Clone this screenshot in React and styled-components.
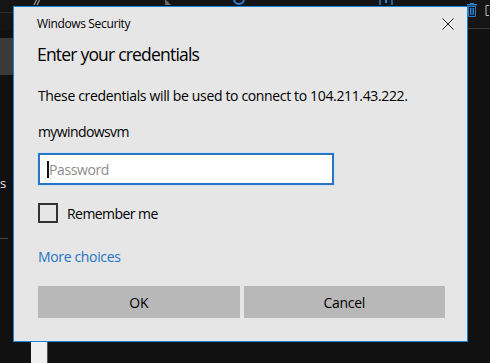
import styled, { createGlobalStyle } from "styled-components";

const GlobalStyle = createGlobalStyle`
  html, body {
    margin: 0;
    padding: 0;
    background: #111111;
  }
  * {
    box-sizing: border-box;
  }
`;

const Desktop = styled.div`
  position: relative;
  width: 490px;
  height: 363px;
  overflow: hidden;
  background: #111111;
  font-family: "Segoe UI", "Open Sans", sans-serif;
`;

// bits of the app that sits behind the dialog
const TopStrip = styled.div`
  position: absolute;
  left: 0;
  top: 0;
  width: 490px;
  height: 30px;
  background: #151515;
`;

const StripIcon = styled.div`
  position: absolute;
  top: ${(p) => p.top || 0}px;
  left: ${(p) => p.left}px;
  color: ${(p) => p.color || "#2d7fd0"};
  line-height: 0;
`;

const SideRow = styled.div`
  position: absolute;
  left: 0;
  top: 38px;
  width: 14px;
  height: 37px;
  background: #3a3a3a;
`;

const SideGlyph = styled.div`
  position: absolute;
  left: 0;
  top: 174px;
  color: #e8e8e8;
  font-size: 13px;
  font-family: "Open Sans", sans-serif;
`;

const SideRule = styled.div`
  position: absolute;
  left: 0;
  top: ${(p) => p.top}px;
  width: ${(p) => p.width}px;
  height: 1px;
  background: ${(p) => p.color || "#4a4a4a"};
`;

const RightRule = styled.div`
  position: absolute;
  left: 467px;
  top: 28px;
  width: 23px;
  height: 1px;
  background: #3a3a3a;
`;

const BottomTab = styled.div`
  position: absolute;
  left: 31px;
  top: 340px;
  width: 17px;
  height: 30px;
  background: #efefef;
  border-right: 1px solid #555555;
`;

const Dialog = styled.div`
  position: absolute;
  left: 13px;
  top: 6px;
  width: 455px;
  height: 336px;
  background: #e6e6e6;
  border: 1px solid #1a84d8;
  display: flex;
  flex-direction: column;
  color: #000000;
`;

const TitleBar = styled.div`
  height: 33px;
  display: flex;
  align-items: center;
  justify-content: space-between;
  padding-left: 23px;
  padding-right: 4px;
`;

const TitleText = styled.span`
  font-size: 12px;
  letter-spacing: -0.35px;
`;

const CloseButton = styled.div`
  width: 30px;
  height: 30px;
  display: flex;
  align-items: center;
  justify-content: center;
  margin-top: 1px;
`;

const Body = styled.div`
  display: flex;
  flex-direction: column;
  padding: 0 22px 0 24px;
`;

const Heading = styled.div`
  height: 28px;
  line-height: 29px;
  font-size: 17.5px;
  letter-spacing: -0.8px;
  margin-left: -1px;
`;

const Line = styled.div`
  height: 20px;
  line-height: 20px;
  font-size: ${(p) => p.size || 14}px;
  letter-spacing: ${(p) => p.spacing || -0.35}px;
  margin-top: ${(p) => p.gap}px;
  color: ${(p) => p.color || "#000000"};
`;

const Field = styled.div`
  margin-top: 11px;
  width: 296px;
  height: 32px;
  background: #ffffff;
  border: 2px solid #2a74c0;
  box-shadow: 0 0 0 1px #cfe4f7;
  display: flex;
  align-items: center;
  padding-left: 7px;
`;

const Caret = styled.span`
  width: 2px;
  height: 17px;
  background: #111111;
`;

const Placeholder = styled.span`
  font-size: 14px;
  letter-spacing: -0.4px;
  color: #8c8c8c;
`;

const CheckRow = styled.label`
  margin-top: 18px;
  height: 20px;
  display: flex;
  align-items: center;
  gap: 9px;
  font-size: 14px;
  letter-spacing: -0.55px;
`;

const CheckBox = styled.span`
  width: 20px;
  height: 20px;
  border: 2px solid #333333;
  background: #e6e6e6;
`;

const Buttons = styled.div`
  margin-top: 19px;
  display: grid;
  grid-template-columns: 1fr 1fr;
  gap: 4px;
`;

const Button = styled.div`
  height: 32px;
  background: #b8b8b8;
  display: flex;
  align-items: center;
  justify-content: center;
  font-size: 14px;
  letter-spacing: -0.3px;
`;

export default function App() {
  return (
    <>
      <GlobalStyle />
      <Desktop>
        <TopStrip>
          <StripIcon left={33} top={-6} color="#9a9a9a">
            <svg width="8" height="12" viewBox="0 0 8 12">
              <path d="M1 11 L4 5 M4 11 L7 5" stroke="currentColor" strokeWidth="1.2" fill="none" />
            </svg>
          </StripIcon>
          <StripIcon left={165} top={-4} color="#6a6a6a">
            <svg width="8" height="10" viewBox="0 0 8 10">
              <path d="M0 3 L6 9 L0 9 Z" fill="currentColor" />
            </svg>
          </StripIcon>
          <StripIcon left={233} top={-6}>
            <svg width="12" height="12" viewBox="0 0 12 12">
              <circle cx="6" cy="5" r="5" stroke="currentColor" strokeWidth="2" fill="none" />
            </svg>
          </StripIcon>
          <StripIcon left={315} top={3}>
            <svg width="10" height="3" viewBox="0 0 10 3">
              <rect x="0" y="0" width="10" height="2" fill="currentColor" />
            </svg>
          </StripIcon>
          <StripIcon left={379} top={-4}>
            <svg width="14" height="10" viewBox="0 0 14 10">
              <path d="M3 1 H1 V9 M11 1 H13 V9" stroke="currentColor" strokeWidth="1.4" fill="none" />
              <rect x="6" y="4" width="2" height="3" fill="currentColor" />
            </svg>
          </StripIcon>
          <StripIcon left={467} top={3}>
            <svg width="10" height="14" viewBox="0 0 10 14">
              <rect x="0" y="1" width="10" height="1.5" fill="currentColor" />
              <rect x="3" y="0" width="4" height="1.5" fill="currentColor" />
              <path d="M1.5 3.5 H8.5 V13.5 H1.5 Z M3.5 5 V12 M5 5 V12 M6.5 5 V12" stroke="currentColor" strokeWidth="1" fill="none" />
            </svg>
          </StripIcon>
          <StripIcon left={485} top={5} color="#bdbdbd">
            <svg width="5" height="11" viewBox="0 0 5 11">
              <path d="M4 0.5 H1 V10.5 H4" stroke="currentColor" strokeWidth="1" fill="none" />
            </svg>
          </StripIcon>
        </TopStrip>
        <SideRule top={12} width={14} color="#2e2e2e" />
        <SideRow />
        <SideGlyph>s</SideGlyph>
        <SideRule top={238} width={8} />
        <RightRule />
        <BottomTab />

        <Dialog>
          <TitleBar>
            <TitleText>Windows Security</TitleText>
            <CloseButton>
              <svg width="12" height="12" viewBox="0 0 12 12">
                <path d="M0.5 0.5 L11.5 11.5 M11.5 0.5 L0.5 11.5" stroke="#1a1a1a" strokeWidth="1" fill="none" />
              </svg>
            </CloseButton>
          </TitleBar>
          <Body>
            <Heading>Enter your credentials</Heading>
            <Line gap={18}>These credentials will be used to connect to 104.211.43.222.</Line>
            <Line gap={16} spacing={-0.6}>mywindowsvm</Line>
            <Field>
              <Caret />
              <Placeholder>Password</Placeholder>
            </Field>
            <CheckRow>
              <CheckBox />
              Remember me
            </CheckRow>
            <Line gap={24} color="#1f74c7">More choices</Line>
            <Buttons>
              <Button>OK</Button>
              <Button>Cancel</Button>
            </Buttons>
          </Body>
        </Dialog>
      </Desktop>
    </>
  );
}
